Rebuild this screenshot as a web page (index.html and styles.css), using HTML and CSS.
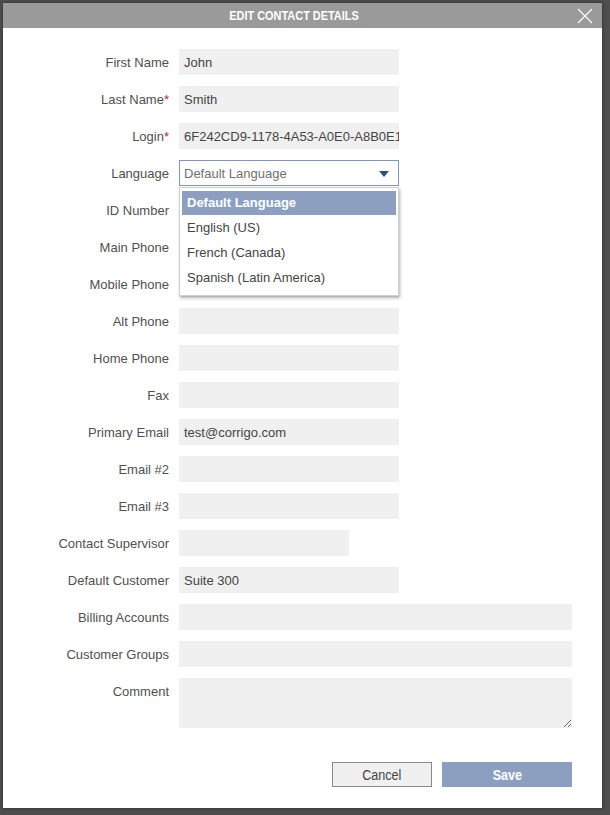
FILE: index.html
```html
<!DOCTYPE html>
<html>
<head>
<meta charset="utf-8">
<link rel="stylesheet" href="styles.css">
</head>
<body>
<div class="modal">
  <div class="modal-head">
    <span class="title">EDIT CONTACT DETAILS</span>
    <svg class="close" width="16" height="16" viewBox="0 0 16 16"><path d="M1 1L15 15M15 1L1 15" stroke="#fff" stroke-width="1.2" fill="none"/></svg>
  </div>
  <div class="modal-body">
    <div class="form">
      <label class="lbl">First Name</label><div class="field"><input class="inp" value="John"></div>
      <label class="lbl">Last Name<span class="req">*</span></label><div class="field"><input class="inp" value="Smith"></div>
      <label class="lbl">Login<span class="req">*</span></label><div class="field"><input class="inp" value="6F242CD9-1178-4A53-A0E0-A8B0E1D4C7F2"></div>
      <label class="lbl">Language</label>
      <div class="field select-wrap">
        <div class="select"><span>Default Language</span><svg class="arrow" width="10" height="6" viewBox="0 0 10 6"><path d="M0 0H10L5 6Z" fill="#2f4d80"/></svg></div>
        <ul class="menu">
          <li class="opt active">Default Language</li>
          <li class="opt">English (US)</li>
          <li class="opt">French (Canada)</li>
          <li class="opt">Spanish (Latin America)</li>
        </ul>
      </div>
      <label class="lbl">ID Number</label><div class="field"><input class="inp"></div>
      <label class="lbl">Main Phone</label><div class="field"><input class="inp"></div>
      <label class="lbl">Mobile Phone</label><div class="field"><input class="inp"></div>
      <label class="lbl">Alt Phone</label><div class="field"><input class="inp"></div>
      <label class="lbl">Home Phone</label><div class="field"><input class="inp"></div>
      <label class="lbl">Fax</label><div class="field"><input class="inp"></div>
      <label class="lbl">Primary Email</label><div class="field"><input class="inp" value="test@corrigo.com"></div>
      <label class="lbl">Email #2</label><div class="field"><input class="inp"></div>
      <label class="lbl">Email #3</label><div class="field"><input class="inp"></div>
      <label class="lbl">Contact Supervisor</label><div class="field"><input class="inp short"></div>
      <label class="lbl">Default Customer</label><div class="field"><input class="inp" value="Suite 300"></div>
      <label class="lbl">Billing Accounts</label><div class="field"><input class="inp wide"></div>
      <label class="lbl">Customer Groups</label><div class="field"><input class="inp wide"></div>
      <label class="lbl">Comment</label><div class="field"><textarea class="inp wide area"></textarea></div>
    </div>
    <div class="actions">
      <button class="btn cancel"><span class="btn-text">Cancel</span></button>
      <button class="btn save"><span class="btn-text">Save</span></button>
    </div>
  </div>
</div>
</body>
</html>
```
FILE: styles.css
```css
html, body {
  margin: 0;
  padding: 0;
}
body {
  background: #4e4e4e;
  width: 610px;
  height: 815px;
  overflow: hidden;
  padding: 3px 0 0 3px;
  box-sizing: border-box;
  font-family: "Liberation Sans", Arial, sans-serif;
}
.modal {
  width: 599px;
  height: 805px;
  background: #fff;
  display: flex;
  flex-direction: column;
  box-shadow: 0 0 3px rgba(0,0,0,0.5);
}
.modal-head {
  height: 25px;
  background: #9a9a9a;
  display: flex;
  align-items: center;
  justify-content: center;
  padding-right: 16px;
  position: relative;
}
.title {
  color: #fff;
  font-family: "Liberation Sans", Arial, sans-serif;
  font-weight: bold;
  font-size: 13px;
  display: inline-block;
  transform: scaleX(0.84);
}
.close {
  position: absolute;
  right: 9px;
  top: 5px;
}
.modal-body {
  padding: 21px 30px 0 0;
}
.form {
  display: grid;
  grid-template-columns: 166px 1fr;
  grid-auto-rows: auto;
  column-gap: 10px;
  row-gap: 11px;
}
.lbl {
  text-align: right;
  font-size: 13px;
  height: 26px;
  line-height: 28px;
  color: #505050;
}
.req {
  color: #c0282d;
}
.field {
  display: flex;
}
.inp {
  width: 220px;
  height: 26px;
  box-sizing: border-box;
  border: none;
  background: #f0f0f0;
  padding: 0 0 0 5px;
  font-family: "Liberation Sans", Arial, sans-serif;
  font-size: 13px;
  color: #444;
  outline: none;
  margin: 0;
}
.short { width: 170px; }
.wide { width: 393px; }
.area {
  height: 50px;
  resize: both;
  padding: 4px 5px;
}
.select-wrap {
  position: relative;
}
.select {
  width: 220px;
  height: 26px;
  box-sizing: border-box;
  border: 1px solid #7f94c9;
  background: #fff;
  display: flex;
  align-items: center;
  justify-content: space-between;
  padding: 0 9px 0 4px;
  font-size: 13px;
  color: #707070;
}
.arrow {
  margin-top: 2px;
}
.menu {
  position: absolute;
  left: 0;
  top: 27px;
  width: 220px;
  box-sizing: border-box;
  margin: 0;
  padding: 3px 2px 5px 2px;
  list-style: none;
  background: #fff;
  border: 1px solid #d0d0d0;
  box-shadow: 1px 2px 3px rgba(0,0,0,0.3);
  z-index: 2;
}
.opt {
  height: 25px;
  line-height: 25px;
  padding-left: 5px;
  font-size: 13px;
  color: #444;
}
.opt.active {
  height: 24px;
  line-height: 24px;
  background: #8d9fc1;
  color: #fff;
  font-weight: bold;
}
.actions {
  display: flex;
  justify-content: flex-end;
  gap: 10px;
  margin-top: 34px;
}
.btn {
  height: 25px;
  box-sizing: border-box;
  font-family: "Liberation Sans", Arial, sans-serif;
  font-size: 14px;
  margin: 0;
  padding: 0;
}
.btn-text {
  display: inline-block;
  transform: scaleX(0.9);
}
.cancel {
  width: 100px;
  background: #f0f0f0;
  border: 1px solid #8a8a8a;
  color: #444;
}
.save {
  width: 130px;
  background: #8d9fc1;
  border: none;
  color: #fff;
  font-weight: bold;
}
```
